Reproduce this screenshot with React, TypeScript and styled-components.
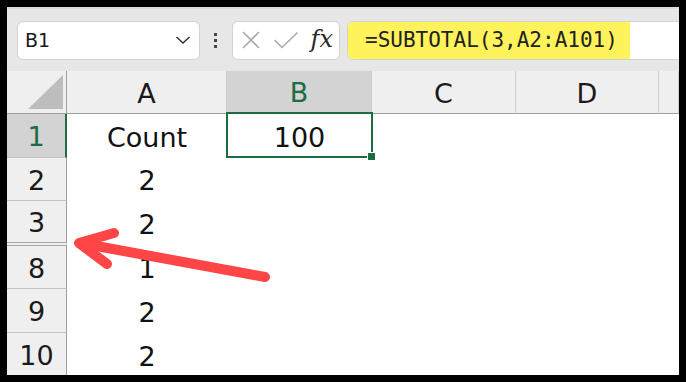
import React from 'react';
import styled, { createGlobalStyle } from 'styled-components';

const GREEN = '#1e6c41';
const HEAD_BG = '#efefef';
const HEAD_SEL = '#d3d3d3';

const GlobalStyle = createGlobalStyle`
  html, body {
    margin: 0;
    padding: 0;
    background: #000;
  }
  * {
    box-sizing: border-box;
  }
`;

const Frame = styled.div`
  position: relative;
  width: 686px;
  height: 382px;
  padding: 7px;
  background: #000;
`;

const Sheet = styled.div`
  width: 672px;
  height: 368px;
  overflow: hidden;
  background: #fff;
  display: flex;
  flex-direction: column;
  font-family: 'DejaVu Sans', sans-serif;
  color: #1a1a1a;
`;

const Toolbar = styled.div`
  flex: none;
  height: 64px;
  display: flex;
  align-items: center;
  padding-left: 10px;
  background: #e7e7e7;
  border-top: 2px solid #dadada;
`;

const Box = styled.div`
  height: 39px;
  background: #fff;
  border: 1px solid #d2d2d2;
  border-radius: 6px;
  display: flex;
  align-items: center;
`;

const NameBox = styled(Box)`
  width: 183px;
  padding: 0 8px 0 7px;
  justify-content: space-between;
  font-size: 19px;
`;

const Dots = styled.div`
  width: 4px;
  margin: 0 14px;
  display: flex;
  flex-direction: column;
  gap: 3px;
  span {
    display: block;
    width: 3px;
    height: 3px;
    background: #444;
  }
`;

const Buttons = styled(Box)`
  width: 108px;
  padding: 0 6px 0 8px;
  justify-content: space-between;
`;

const Fx = styled.span`
  font-family: 'DejaVu Serif', 'Liberation Serif', serif;
  font-style: italic;
  font-size: 24px;
  color: #2a2a2a;
  margin-top: -3px;
`;

const FormulaBox = styled(Box)`
  flex: 1;
  margin-left: 7px;
  margin-right: -10px;
  overflow: hidden;
  align-items: stretch;
`;

const Highlight = styled.span`
  display: flex;
  align-items: center;
  padding: 0 12px 0 17px;
  background: #fff35c;
  font-family: 'DejaVu Sans Mono', 'Liberation Mono', monospace;
  font-size: 21px;
  color: #222;
`;

const COLS = '60px 160px 145px 144px 143px 1fr';

const Row = styled.div<{ $h: number }>`
  flex: none;
  display: grid;
  grid-template-columns: ${COLS};
  height: ${p => p.$h}px;
`;

const Corner = styled.div`
  background: ${HEAD_BG};
  border-right: 1px solid #9e9e9e;
  border-bottom: 1px solid #9e9e9e;
  display: flex;
  align-items: flex-end;
  justify-content: flex-end;
  padding: 0 3px 4px 0;
`;

const Triangle = styled.div`
  width: 35px;
  height: 34px;
  background: #bdbdbd;
  clip-path: polygon(100% 0, 100% 100%, 0 100%);
`;

const ColHead = styled.div<{ $sel?: boolean }>`
  display: flex;
  align-items: center;
  justify-content: center;
  padding-top: 2px;
  font-size: 27px;
  background: ${p => (p.$sel ? HEAD_SEL : HEAD_BG)};
  color: ${p => (p.$sel ? GREEN : '#1a1a1a')};
  border-right: 1px solid #cdcdcd;
  border-bottom: ${p => (p.$sel ? `2px solid ${GREEN}` : '1px solid #9e9e9e')};
`;

const RowHead = styled.div<{ $sel?: boolean; $double?: boolean }>`
  display: flex;
  align-items: center;
  justify-content: center;
  padding-top: 2px;
  font-size: 27px;
  background: ${p => (p.$sel ? HEAD_SEL : HEAD_BG)};
  color: ${p => (p.$sel ? GREEN : '#1a1a1a')};
  border-right: ${p => (p.$sel ? `2px solid ${GREEN}` : '1px solid #9e9e9e')};
  border-bottom: ${p => (p.$double ? '4px double #a9a9a9' : '1px solid #c4c4c4')};
`;

const Cell = styled.div<{ $sel?: boolean }>`
  position: relative;
  display: flex;
  align-items: center;
  justify-content: center;
  padding-top: 2px;
  font-size: 27px;
  color: #111;
  ${p =>
    p.$sel &&
    `
    &::after {
      content: '';
      position: absolute;
      top: -2px;
      left: -1px;
      right: -1px;
      bottom: 0;
      border: 2px solid ${GREEN};
    }
    &::before {
      content: '';
      position: absolute;
      right: -4px;
      bottom: -3px;
      width: 7px;
      height: 7px;
      background: ${GREEN};
      border: 1px solid #fff;
      z-index: 1;
    }
  `}
`;

const Overlay = styled.svg`
  position: absolute;
  left: 0;
  top: 0;
  pointer-events: none;
`;

const rows = [
  { n: '1', a: 'Count', b: '100', h: 44, sel: true },
  { n: '2', a: '2', h: 43 },
  { n: '3', a: '2', h: 45, double: true },
  { n: '8', a: '1', h: 43 },
  { n: '9', a: '2', h: 44 },
  { n: '10', a: '2', h: 44 },
];

const App = () => (
  <Frame>
    <GlobalStyle />
    <Sheet>
      <Toolbar>
        <NameBox>
          <span>B1</span>
          <svg width="16" height="10" viewBox="0 0 16 10">
            <polyline points="1.5,2 8,8 14.5,2" fill="none" stroke="#333" strokeWidth="1.5" />
          </svg>
        </NameBox>
        <Dots>
          <span />
          <span />
          <span />
        </Dots>
        <Buttons>
          <svg width="20" height="20" viewBox="0 0 20 20">
            <path d="M2 2 L18 18 M18 2 L2 18" stroke="#aaa" strokeWidth="1.6" fill="none" />
          </svg>
          <svg width="26" height="18" viewBox="0 0 26 18">
            <polyline points="1.5,9 9,16.5 24.5,1.5" fill="none" stroke="#aaa" strokeWidth="1.6" />
          </svg>
          <Fx>fx</Fx>
        </Buttons>
        <FormulaBox>
          <Highlight>=SUBTOTAL(3,A2:A101)</Highlight>
        </FormulaBox>
      </Toolbar>

      <Row $h={43}>
        <Corner>
          <Triangle />
        </Corner>
        <ColHead>A</ColHead>
        <ColHead $sel>B</ColHead>
        <ColHead>C</ColHead>
        <ColHead>D</ColHead>
        <ColHead />
      </Row>

      {rows.map(r => (
        <Row key={r.n} $h={r.h}>
          <RowHead $sel={r.sel} $double={r.double}>{r.n}</RowHead>
          <Cell>{r.a}</Cell>
          <Cell $sel={r.sel}>{r.b}</Cell>
          <Cell />
          <Cell />
          <Cell />
        </Row>
      ))}
    </Sheet>

    <Overlay width="686" height="382" viewBox="0 0 686 382">
      <g fill="none" stroke="#ff4545" strokeWidth="10" strokeLinecap="round" strokeLinejoin="round">
        <line x1="265" y1="277" x2="80" y2="243" />
        <polyline points="114,233 79,243 107,264" />
      </g>
    </Overlay>
  </Frame>
);

export default App;
